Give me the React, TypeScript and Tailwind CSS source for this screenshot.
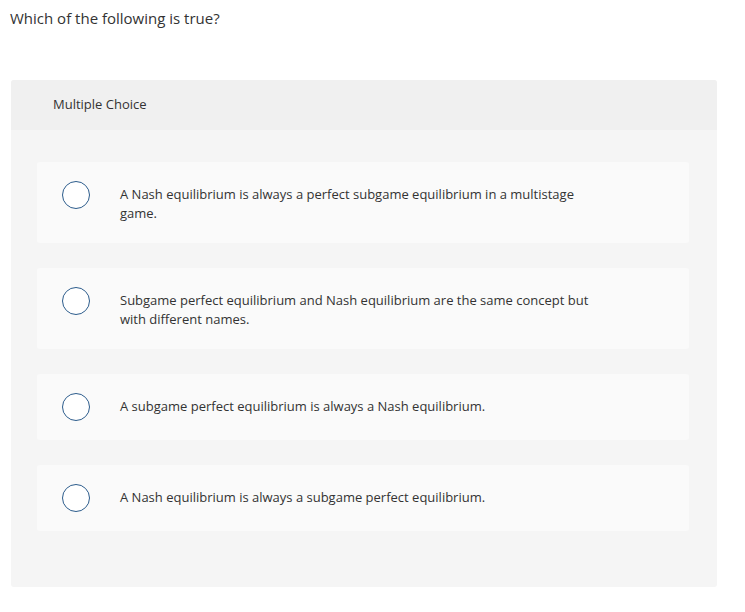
import React from "react";

const options = [
  "A Nash equilibrium is always a perfect subgame equilibrium in a multistage game.",
  "Subgame perfect equilibrium and Nash equilibrium are the same concept but with different names.",
  "A subgame perfect equilibrium is always a Nash equilibrium.",
  "A Nash equilibrium is always a subgame perfect equilibrium.",
];

export default function App() {
  return (
    <div className="w-[745px] h-[612px] bg-white text-[#333333]" style={{ fontFamily: "'Open Sans', 'Noto Sans', sans-serif" }}>
      <div className="pl-[10px] pt-[8px] text-[15px] leading-[20px]">Which of the following is true?</div>
      <div className="ml-[11px] mt-[52px] w-[706px] h-[507px] rounded-[3px] bg-[#f5f5f5] overflow-hidden">
        <div className="h-[50px] bg-[#f0f0f0] pl-[42px] flex items-center text-[13px]">Multiple Choice</div>
        <div className="pt-[32px] pl-[26px] pr-[28px] flex flex-col gap-[25px]">
          {options.map((o, i) => (
            <div key={i} className="bg-[#fafafa] rounded-[3px] py-[19px] pl-[25px] flex items-start">
              <div className="w-[28px] h-[28px] shrink-0 rounded-full border-[1.5px] border-[#2c5c8c] bg-white" />
              <div className="ml-[30px] pt-[4px] pb-[1px] w-[480px] text-[13px] leading-[19px]">{o}</div>
            </div>
          ))}
        </div>
      </div>
    </div>
  );
}
